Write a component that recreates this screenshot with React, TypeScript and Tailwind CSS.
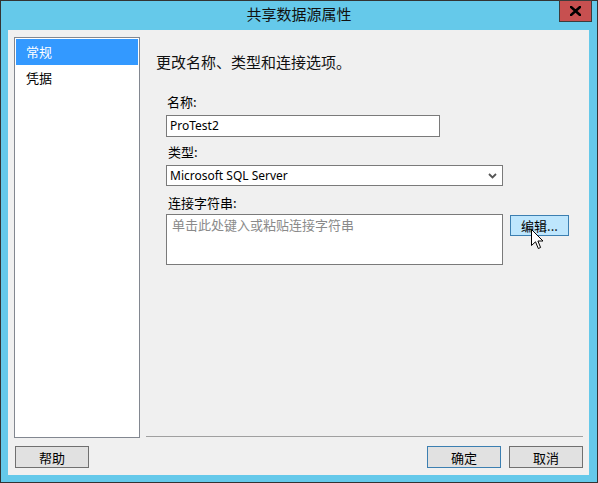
import React from 'react';

const cjk = { fontFamily: '"Noto Sans CJK SC", "Noto Sans", sans-serif' };
const latin = { fontFamily: '"Noto Sans", "Noto Sans CJK SC", sans-serif' };

function WinButton({ label, primary }: { label: string; primary?: boolean }) {
  return (
    <button
      className={`w-[74px] h-[22px] bg-[#e1e1e1] border text-[13px] leading-none text-black flex items-center justify-center ${
        primary ? 'border-[#3c7fb1]' : 'border-[#707070]'
      }`}
      style={cjk}
    >
      {label}
    </button>
  );
}

export default function App() {
  return (
    <div className="w-[598px] h-[483px] bg-[#65c9ea] border border-[#333] flex flex-col relative select-none">
      {/* title bar */}
      <div className="h-[29px] flex items-center justify-center text-[15px] text-[#111] relative" style={cjk}>
        <span className="-mt-[2px]">共享数据源属性</span>
        <div className="absolute right-[5px] -top-px w-[33px] h-[22px] bg-[#c75050] border border-[#3c3c3c] flex items-center justify-center">
          <svg width="11" height="10" viewBox="0 0 11 10">
            <path d="M1 1 L10 9 M10 1 L1 9" stroke="#000" strokeWidth="2.6" strokeLinecap="square" />
          </svg>
        </div>
      </div>

      {/* client area */}
      <div className="ml-[7px] mr-[8px] h-[445px] bg-[#f0f0f0] pl-[6px] pr-[6px] pt-[7px] flex flex-col">
        <div className="flex h-[401px]">
          <div className="w-[126px] h-full bg-white border border-[#828790] p-px text-[13px]" style={cjk}>
            <div className="h-[26px] bg-[#3399ff] text-white pl-[10px] flex items-center">常规</div>
            <div className="h-[26px] text-black pl-[10px] flex items-center">凭据</div>
          </div>

          <div className="flex-1 ml-[6px] h-[400px] border-b border-[#a0a0a0] pl-[10px] pt-[15px] relative">
            <div className="h-[20px] text-[15px] leading-[20px] text-[#111]" style={cjk}>
              更改名称、类型和连接选项。
            </div>

            <div className="pl-[10px]">
              <div className="mt-[22px] h-[16px] leading-[16px] text-[13px] pl-px text-black" style={cjk}>名称:</div>
              <div
                className="mt-[5px] w-[274px] h-[22px] bg-white border border-[#7a7a7a] text-[12px] flex items-center pl-[3px] text-black"
                style={latin}
              >
                ProTest2
              </div>

              <div className="mt-[7px] h-[16px] leading-[16px] text-[13px] pl-[2px] text-black" style={cjk}>类型:</div>
              <div
                className="mt-[5px] w-[337px] h-[21px] bg-white border border-[#7a7a7a] text-[12px] flex items-center justify-between pl-[3px] pr-[5px] text-black"
                style={latin}
              >
                <span>Microsoft SQL Server</span>
                <svg width="9" height="6" viewBox="0 0 9 6">
                  <path d="M1 1 L4.5 4.5 L8 1" stroke="#555" strokeWidth="1.8" fill="none" />
                </svg>
              </div>

              <div className="mt-[9px] h-[16px] leading-[16px] text-[13px] pl-[2px] text-black" style={cjk}>连接字符串:</div>
              <div className="mt-[3px] flex items-start">
                <div
                  className="w-[337px] h-[51px] bg-white border border-[#7a7a7a] text-[13px] text-[#8a8a8a] pl-[5px] pt-px leading-[18px]"
                  style={cjk}
                >
                  单击此处键入或粘贴连接字符串
                </div>
                <button
                  className="ml-[7px] mt-px w-[59px] h-[21px] bg-[#bee6fd] border border-[#3c7fb1] text-[13px] leading-none text-black flex items-center justify-center"
                  style={cjk}
                >
                  编辑...
                </button>
              </div>
            </div>

            {/* mouse cursor */}
            <svg className="absolute left-[385px] top-[192px]" width="13" height="21" viewBox="0 0 13 21">
              <path
                d="M0.5 0.5 L0.5 16.5 L4.5 12.8 L7.3 19.5 L9.6 18.5 L6.9 12 L12 12 Z"
                fill="#fff"
                stroke="#000"
                strokeWidth="1"
                strokeLinejoin="miter"
              />
            </svg>
          </div>
        </div>

        <div className="mt-[8px] flex items-center">
          <div className="ml-px">
            <WinButton label="帮助" />
          </div>
          <div className="ml-auto flex gap-[8px]">
            <WinButton label="确定" primary />
            <WinButton label="取消" />
          </div>
        </div>
      </div>
    </div>
  );
}
